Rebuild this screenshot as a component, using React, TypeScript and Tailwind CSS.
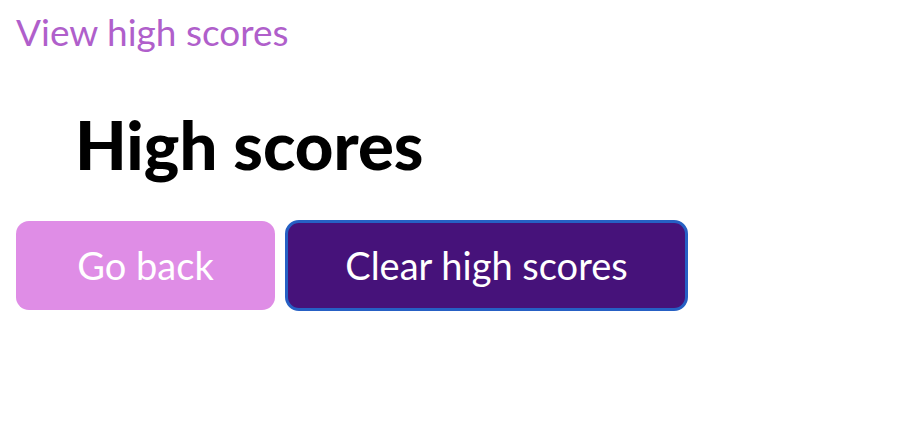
import React from 'react';

export default function App() {
  return (
    <div className="w-[906px] h-[440px] bg-white font-['Lato','Open_Sans',sans-serif]">
      <div className="pl-4 pt-[10px]">
        <a href="#" className="block text-[37px] leading-[44px] text-[#b05fcb]">
          View high scores
        </a>
      </div>

      <h1 className="pl-[75px] mt-[50px] text-[67px] leading-[80px] font-black text-black">
        High scores
      </h1>

      <div className="flex items-center gap-[10px] pl-4 mt-[36px]">
        <button className="w-[259px] h-[89px] rounded-[13px] bg-[#df8de6] text-white text-[38px]">
          Go back
        </button>
        <button className="w-[403px] h-[91px] rounded-[14px] bg-[#46127a] border-[3px] border-[#2660c4] text-white text-[38px]">
          Clear high scores
        </button>
      </div>
    </div>
  );
}
